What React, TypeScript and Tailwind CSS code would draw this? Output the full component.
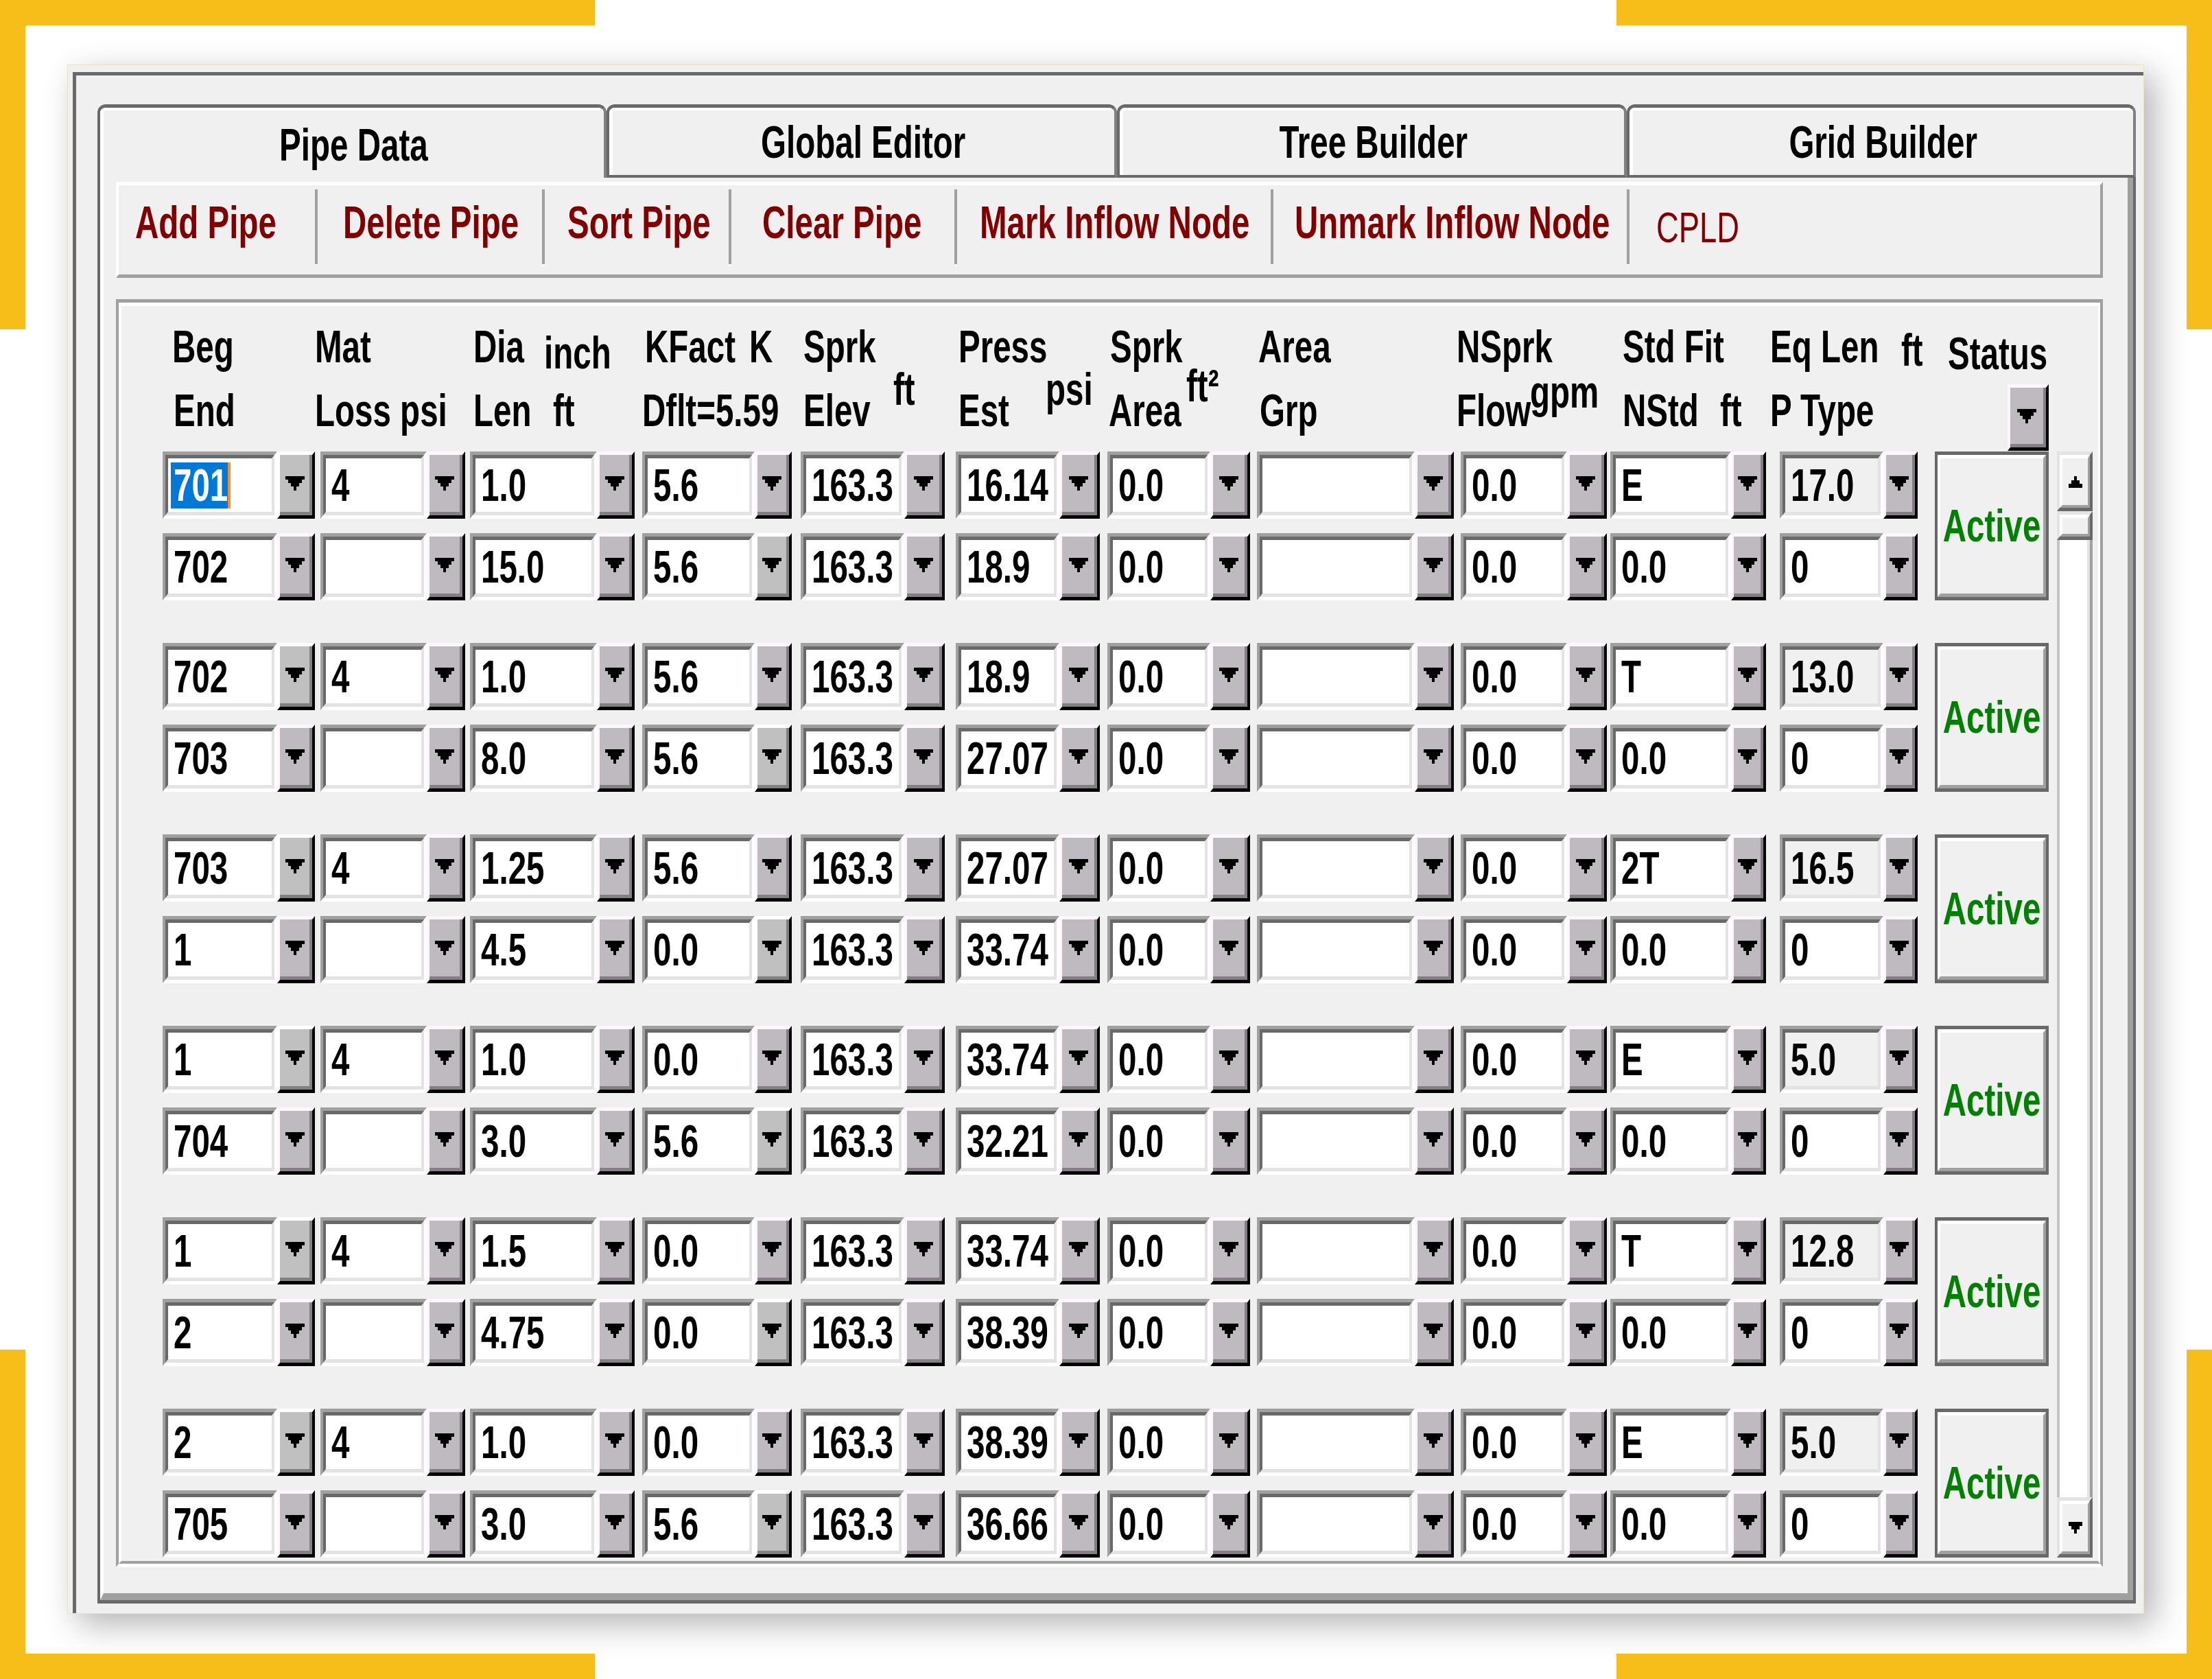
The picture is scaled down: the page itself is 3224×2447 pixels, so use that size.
import React from 'react';

// condensed look of the old bitmap dialog font: Liberation Sans Bold squeezed horizontally
const T = ({ children, c = '' }: { children: React.ReactNode; c?: string }) => (
    <span className={`inline-block whitespace-nowrap scale-x-[0.72] ${c || 'origin-left'}`}>{children}</span>
);

const TABS = [
    { label: 'Pipe Data', w: 'w-[742px]', active: true },
    { label: 'Global Editor', w: 'w-[744px]', active: false },
    { label: 'Tree Builder', w: 'w-[743px]', active: false },
    { label: 'Grid Builder', w: 'w-[742px]', active: false },
];

const TOOLS = [
    { label: 'Add Pipe', cls: 'w-[286px] pl-[24px]' },
    { label: 'Delete Pipe', cls: 'w-[327px] pl-[37px]' },
    { label: 'Sort Pipe', cls: 'w-[268px] pl-[33px]' },
    { label: 'Clear Pipe', cls: 'w-[325px] pl-[45px]' },
    { label: 'Mark Inflow Node', cls: 'w-[457px] pl-[33px]' },
    { label: 'Unmark Inflow Node', cls: 'w-[515px] pl-[31px]' },
];

const HEAD1 = [
    { w: 'w-[208px]', t: 'Beg' },
    { w: 'w-[231px]', t: 'Mat' },
    { w: 'w-[103px]', t: 'Dia' },
    { w: 'w-[147px]', t: 'inch', s: 'mt-[9px]' },
    { w: 'w-[152px]', t: 'KFact' },
    { w: 'w-[79px]', t: 'K' },
    { w: 'w-[226px]', t: 'Sprk' },
    { w: 'w-[221px]', t: 'Press' },
    { w: 'w-[216px]', t: 'Sprk' },
    { w: 'w-[289px]', t: 'Area' },
    { w: 'w-[242px]', t: 'NSprk' },
    { w: 'w-[215px]', t: 'Std Fit' },
    { w: 'w-[191px]', t: 'Eq Len' },
    { w: 'w-[68px]', t: 'ft', s: 'mt-[5px]' },
    { w: 'w-[150px]', t: 'Status', s: 'mt-[10px]' },
];

const HEAD2 = [
    { w: 'w-[206px]', t: 'End' },
    { w: 'w-[231px]', t: 'Loss psi' },
    { w: 'w-[116px]', t: 'Len' },
    { w: 'w-[130px]', t: 'ft' },
    { w: 'w-[235px]', t: 'Dflt=5.59' },
    { w: 'w-[131px]', t: 'Elev' },
    { w: 'w-[95px]', t: 'ft', s: '-mt-[31px]' },
    { w: 'w-[127px]', t: 'Est' },
    { w: 'w-[92px]', t: 'psi', s: '-mt-[31px]' },
    { w: 'w-[113px]', t: 'Area' },
    { w: 'w-[107px]', t: 'ft²', s: '-mt-[36px]' },
    { w: 'w-[287px]', t: 'Grp' },
    { w: 'w-[107px]', t: 'Flow' },
    { w: 'w-[135px]', t: 'gpm', s: '-mt-[27px]' },
    { w: 'w-[142px]', t: 'NStd' },
    { w: 'w-[73px]', t: 'ft' },
    { w: 'w-[346px]', t: 'P Type' },
];

const COLS = [
    { ml: 'ml-[60px]', box: 'w-[167px]', btn: 'w-[55px]' },
    { ml: 'ml-[8px]', box: 'w-[155px]', btn: 'w-[56px]' },
    { ml: 'ml-[7px]', box: 'w-[185px]', btn: 'w-[55px]' },
    { ml: 'ml-[11px]', box: 'w-[164px]', btn: 'w-[54px]' },
    { ml: 'ml-[13px]', box: 'w-[151px]', btn: 'w-[59px]' },
    { ml: 'ml-[16px]', box: 'w-[151px]', btn: 'w-[59px]' },
    { ml: 'ml-[11px]', box: 'w-[150px]', btn: 'w-[58px]' },
    { ml: 'ml-[10px]', box: 'w-[230px]', btn: 'w-[57px]' },
    { ml: 'ml-[10px]', box: 'w-[155px]', btn: 'w-[58px]' },
    { ml: 'ml-[5px]', box: 'w-[176px]', btn: 'w-[51px]' },
    { ml: 'ml-[20px]', box: 'w-[151px]', btn: 'w-[50px]' },
];

const PAIRS: string[][][] = [
    [
        ['701', '4', '1.0', '5.6', '163.3', '16.14', '0.0', '', '0.0', 'E', '17.0'],
        ['702', '', '15.0', '5.6', '163.3', '18.9', '0.0', '', '0.0', '0.0', '0'],
    ],
    [
        ['702', '4', '1.0', '5.6', '163.3', '18.9', '0.0', '', '0.0', 'T', '13.0'],
        ['703', '', '8.0', '5.6', '163.3', '27.07', '0.0', '', '0.0', '0.0', '0'],
    ],
    [
        ['703', '4', '1.25', '5.6', '163.3', '27.07', '0.0', '', '0.0', '2T', '16.5'],
        ['1', '', '4.5', '0.0', '163.3', '33.74', '0.0', '', '0.0', '0.0', '0'],
    ],
    [
        ['1', '4', '1.0', '0.0', '163.3', '33.74', '0.0', '', '0.0', 'E', '5.0'],
        ['704', '', '3.0', '5.6', '163.3', '32.21', '0.0', '', '0.0', '0.0', '0'],
    ],
    [
        ['1', '4', '1.5', '0.0', '163.3', '33.74', '0.0', '', '0.0', 'T', '12.8'],
        ['2', '', '4.75', '0.0', '163.3', '38.39', '0.0', '', '0.0', '0.0', '0'],
    ],
    [
        ['2', '4', '1.0', '0.0', '163.3', '38.39', '0.0', '', '0.0', 'E', '5.0'],
        ['705', '', '3.0', '5.6', '163.3', '36.66', '0.0', '', '0.0', '0.0', '0'],
    ],
];

const DownArrow = () => (
    <svg width="28" height="21" viewBox="0 0 28 21">
        <path d="M0 0H28V5H24V10H20V15H16V21H12V15H8V10H4V5H0Z" fill="#000" />
    </svg>
);

const DropBtn = ({ w, h = 'h-[98px]', gray = false }: { w: string; h?: string; gray?: boolean }) => (
    <div
        className={`${w} ${h} shrink-0 border-t-[5px] border-l-[4px] border-r-[4px] border-b-[5px] border-r-black border-b-black ${
            gray ? 'border-t-white border-l-white' : 'border-t-[#fdf7fd] border-l-[#fdf7fd]'
        }`}
    >
        <div
            className={`h-full flex items-center justify-center border-r-[4px] border-b-[5px] ${
                gray ? 'bg-[#c0c0c0] border-r-[#808080] border-b-[#808080]' : 'bg-[#bfb9c0] border-r-[#857e86] border-b-[#857e86]'
            }`}
        >
            <DownArrow />
        </div>
    </div>
);

const Cell = ({ w, value, selected, shaded }: { w: string; value: string; selected: boolean; shaded: boolean }) => (
    <div className={`${w} h-[98px] shrink-0 border-t-[5px] border-l-[4px] border-r-[4px] border-b-[5px] border-t-[#a0a0a0] border-l-[#a0a0a0] border-r-white border-b-white`}>
        <div
            className={`h-full overflow-hidden border-t-[5px] border-l-[4px] border-r-[4px] border-b-[5px] border-t-[#696969] border-l-[#696969] border-r-[#e3e3e3] border-b-[#e3e3e3] ${
                shaded ? 'bg-[#f0f0f0]' : 'bg-white'
            } ${selected ? 'flex items-start pl-[4px]' : 'pl-[8px] leading-[78px]'}`}
        >
            {selected ? (
                <>
                    <div className="mt-[6px] h-[67px] w-[83px] bg-[#0078d7] pl-[4px] leading-[67px] text-white">
                        <T>{value}</T>
                    </div>
                    <div className="mt-[6px] h-[67px] w-[4px] bg-[#ff8c22]" />
                </>
            ) : (
                <T>{value}</T>
            )}
        </div>
    </div>
);

const ActiveBtn = () => (
    <div className="ml-[25px] w-[166px] h-[217px] border-x-[4px] border-y-[5px] border-[#696969]">
        <div className="h-full flex items-center justify-center border-t-[5px] border-l-[4px] border-r-[4px] border-b-[5px] border-t-white border-l-white border-r-[#a0a0a0] border-b-[#a0a0a0] bg-[#f0f0f0] text-[#008000] leading-[93px]">
            <T c="origin-center">Active</T>
        </div>
    </div>
);

const ScrollPart = ({ h, children }: { h: string; children?: React.ReactNode }) => (
    <div className={`${h} shrink-0 border-t-[5px] border-l-[4px] border-r-[4px] border-b-[5px] border-t-[#e3e3e3] border-l-[#e3e3e3] border-r-[#696969] border-b-[#696969]`}>
        <div className="h-full flex items-center justify-center border-t-[5px] border-l-[4px] border-r-[3px] border-b-[4px] border-t-white border-l-white border-r-[#a0a0a0] border-b-[#a0a0a0] bg-[#f0f0f0]">
            {children}
        </div>
    </div>
);

const ScrollBar = () => (
    <div className="ml-[12px] w-[52px] h-[1612px] flex flex-col">
        <ScrollPart h="h-[87px]">
            <svg width="20" height="17" viewBox="0 0 20 17">
                <path d="M8 0H12V6H16V11H20V17H0V11H4V6H8Z" fill="#000" />
            </svg>
        </ScrollPart>
        <ScrollPart h="h-[42px]" />
        <div className="flex-1 bg-white border-l-[4px] border-l-[#c4c4c4] border-r-[4px] border-r-[#a0a0a0]">
            <div className="h-full ml-auto w-[4px] bg-[#e3e3e3]" />
        </div>
        <ScrollPart h="h-[88px]">
            <svg width="20" height="17" viewBox="0 0 20 17">
                <path d="M0 0H20V6H16V11H12V17H8V11H4V6H0Z" fill="#000" />
            </svg>
        </ScrollPart>
    </div>
);

const Tab = ({ label, w, active }: { label: string; w: string; active: boolean }) => (
    <div
        className={`${w} h-[107px] shrink-0 rounded-t-[12px] border-t-[5px] border-l-[4px] border-r-[4px] border-t-[#696969] border-l-[#696969] border-r-[#808080] ${
            active ? '' : 'border-b-[4px] border-b-[#696969]'
        }`}
    >
        <div className={`h-full rounded-t-[8px] border-t-[4px] border-l-[5px] border-white flex justify-center leading-[93px] ${active ? 'pt-[4px]' : ''}`}>
            <T c="origin-center">{label}</T>
        </div>
    </div>
);

const Separator = () => (
    <div className="mt-[6px] w-[4px] h-[112px] shrink-0 bg-[#a0a0a0] border-b-[3px] border-white" />
);

export default function App() {
    return (
        <div className="relative w-[3224px] h-[2447px] overflow-hidden bg-white font-['Liberation_Sans',Arial,sans-serif] font-bold text-[66px] text-black">
            {/* yellow corner brackets */}
            <div className="absolute left-0 top-0 w-[867px] h-[37px] bg-[#f7bd19]" />
            <div className="absolute left-0 top-0 w-[37px] h-[480px] bg-[#f7bd19]" />
            <div className="absolute right-0 top-0 w-[868px] h-[37px] bg-[#f7bd19]" />
            <div className="absolute right-0 top-0 w-[37px] h-[480px] bg-[#f7bd19]" />
            <div className="absolute left-0 bottom-0 w-[867px] h-[37px] bg-[#f7bd19]" />
            <div className="absolute left-0 bottom-0 w-[37px] h-[480px] bg-[#f7bd19]" />
            <div className="absolute right-0 bottom-0 w-[868px] h-[37px] bg-[#f7bd19]" />
            <div className="absolute right-0 bottom-0 w-[37px] h-[480px] bg-[#f7bd19]" />

            <div className="pt-[94px] pl-[98px]">
                <div className="w-[3027px] h-[2258px] flex flex-col bg-[#f0f0f0] border border-[#ece1c2] shadow-[15px_15px_45px_rgba(0,0,0,0.3)]">
                    <div className="ml-[7px] mt-[10px] flex-1 border-t-[5px] border-l-[5px] border-[#696969] pl-[31px] pt-[42px]">
                        {/* tab control */}
                        <div className="w-[2971px] h-[2185px] flex flex-col">
                            <div className="flex">
                                {TABS.map(t => (
                                    <Tab key={t.label} {...t} />
                                ))}
                            </div>
                            <div className="flex-1 border-l-[4px] border-r-[4px] border-b-[5px] border-[#696969]">
                                <div className="h-full border-l-[5px] border-l-white border-r-[8px] border-r-[#a0a0a0] border-b-[10px] border-b-[#a0a0a0] pl-[18px] pt-[6px]">
                                    {/* toolbar */}
                                    <div className="w-[2896px] h-[140px] flex items-start border-t-[5px] border-l-[4px] border-t-white border-l-white border-b-[5px] border-r-[4px] border-b-[#a0a0a0] border-r-[#a0a0a0] text-[#800000] leading-[93px]">
                                        {TOOLS.map(tool => (
                                            <React.Fragment key={tool.label}>
                                                <div className={`${tool.cls} shrink-0 pt-[8px]`}>
                                                    <T>{tool.label}</T>
                                                </div>
                                                <Separator />
                                            </React.Fragment>
                                        ))}
                                        <div className="pl-[39px] pt-[15px] text-[63px] font-normal">
                                            <T>CPLD</T>
                                        </div>
                                    </div>

                                    {/* pipe grid */}
                                    <div className="mt-[31px] w-[2896px] h-[1848px] flex flex-col border-t-[5px] border-l-[4px] border-r-[4px] border-b-[5px] border-t-[#a0a0a0] border-l-[#a0a0a0] border-r-[#a0a0a0] border-b-white">
                                        <div className="flex-1 border-t-[5px] border-l-[4px] border-r-[3px] border-b-[4px] border-t-white border-l-white border-r-white border-b-[#a0a0a0] pt-[13px]">
                                            <div className="flex items-start h-[93px] leading-[93px] pl-[74px]">
                                                {HEAD1.map((h, i) => (
                                                    <div key={i} className={`${h.w} shrink-0 ${h.s ?? ''}`}>
                                                        <T>{h.t}</T>
                                                    </div>
                                                ))}
                                            </div>
                                            <div className="flex items-start h-[105px] leading-[93px] pl-[76px]">
                                                {HEAD2.map((h, i) => (
                                                    <div key={i} className={`${h.w} shrink-0 ${h.s ?? ''}`}>
                                                        <T>{h.t}</T>
                                                    </div>
                                                ))}
                                                <div className="mt-[8px]">
                                                    <DropBtn w="w-[60px]" h="h-[97px]" />
                                                </div>
                                            </div>

                                            <div className="mt-[1px] flex">
                                                <div className="flex flex-col gap-[62px]">
                                                    {PAIRS.map((pair, pi) => (
                                                        <div key={pi} className="flex">
                                                            {COLS.map((col, ci) => (
                                                                <div key={ci} className={`${col.ml} flex flex-col gap-[21px]`}>
                                                                    {[0, 1].map(ri => (
                                                                        <div key={ri} className="flex">
                                                                            <Cell
                                                                                w={col.box}
                                                                                value={pair[ri][ci]}
                                                                                selected={pi === 0 && ri === 0 && ci === 0}
                                                                                shaded={ci === 10 && ri === 0}
                                                                            />
                                                                            <DropBtn w={col.btn} gray={(ci === 0 && ri === 0) || (ci === 3 && ri === 1)} />
                                                                        </div>
                                                                    ))}
                                                                </div>
                                                            ))}
                                                            <ActiveBtn />
                                                        </div>
                                                    ))}
                                                </div>
                                                <ScrollBar />
                                            </div>
                                        </div>
                                    </div>
                                </div>
                            </div>
                        </div>
                    </div>
                </div>
            </div>
        </div>
    );
}
